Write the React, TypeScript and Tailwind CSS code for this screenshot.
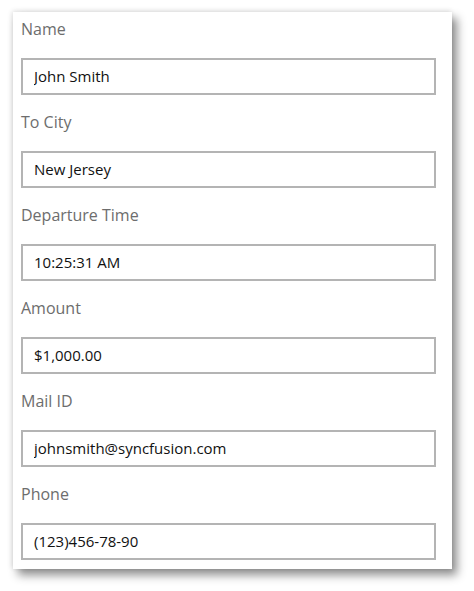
const fields = [
  { label: "Name", value: "John Smith" },
  { label: "To City", value: "New Jersey" },
  { label: "Departure Time", value: "10:25:31 AM" },
  { label: "Amount", value: "$1,000.00" },
  { label: "Mail ID", value: "johnsmith@syncfusion.com" },
  { label: "Phone", value: "(123)456-78-90" },
];

export default function App() {
  return (
    <div className="w-[474px] h-[591px] bg-white pl-[13px] pt-[12px] font-['Open_Sans',sans-serif]">
      <div className="w-[439px] bg-white pl-[8px] pr-[16px] pt-[5px] pb-[9px] flex flex-col gap-[15px] shadow-[5px_6px_9px_rgba(0,0,0,0.45),-1px_-1px_5px_rgba(0,0,0,0.12)]">
        {fields.map((f) => (
          <div key={f.label} className="flex flex-col">
            <label className="h-[24px] leading-[24px] text-[16px] text-[#6d6d6d]">
              {f.label}
            </label>
            <input
              readOnly
              value={f.value}
              className="mt-[17px] h-[37px] w-full border-2 border-[#b4b4b4] px-[11px] pb-[2px] text-[15px] text-[#111] outline-none font-['Open_Sans',sans-serif]"
            />
          </div>
        ))}
      </div>
    </div>
  );
}
